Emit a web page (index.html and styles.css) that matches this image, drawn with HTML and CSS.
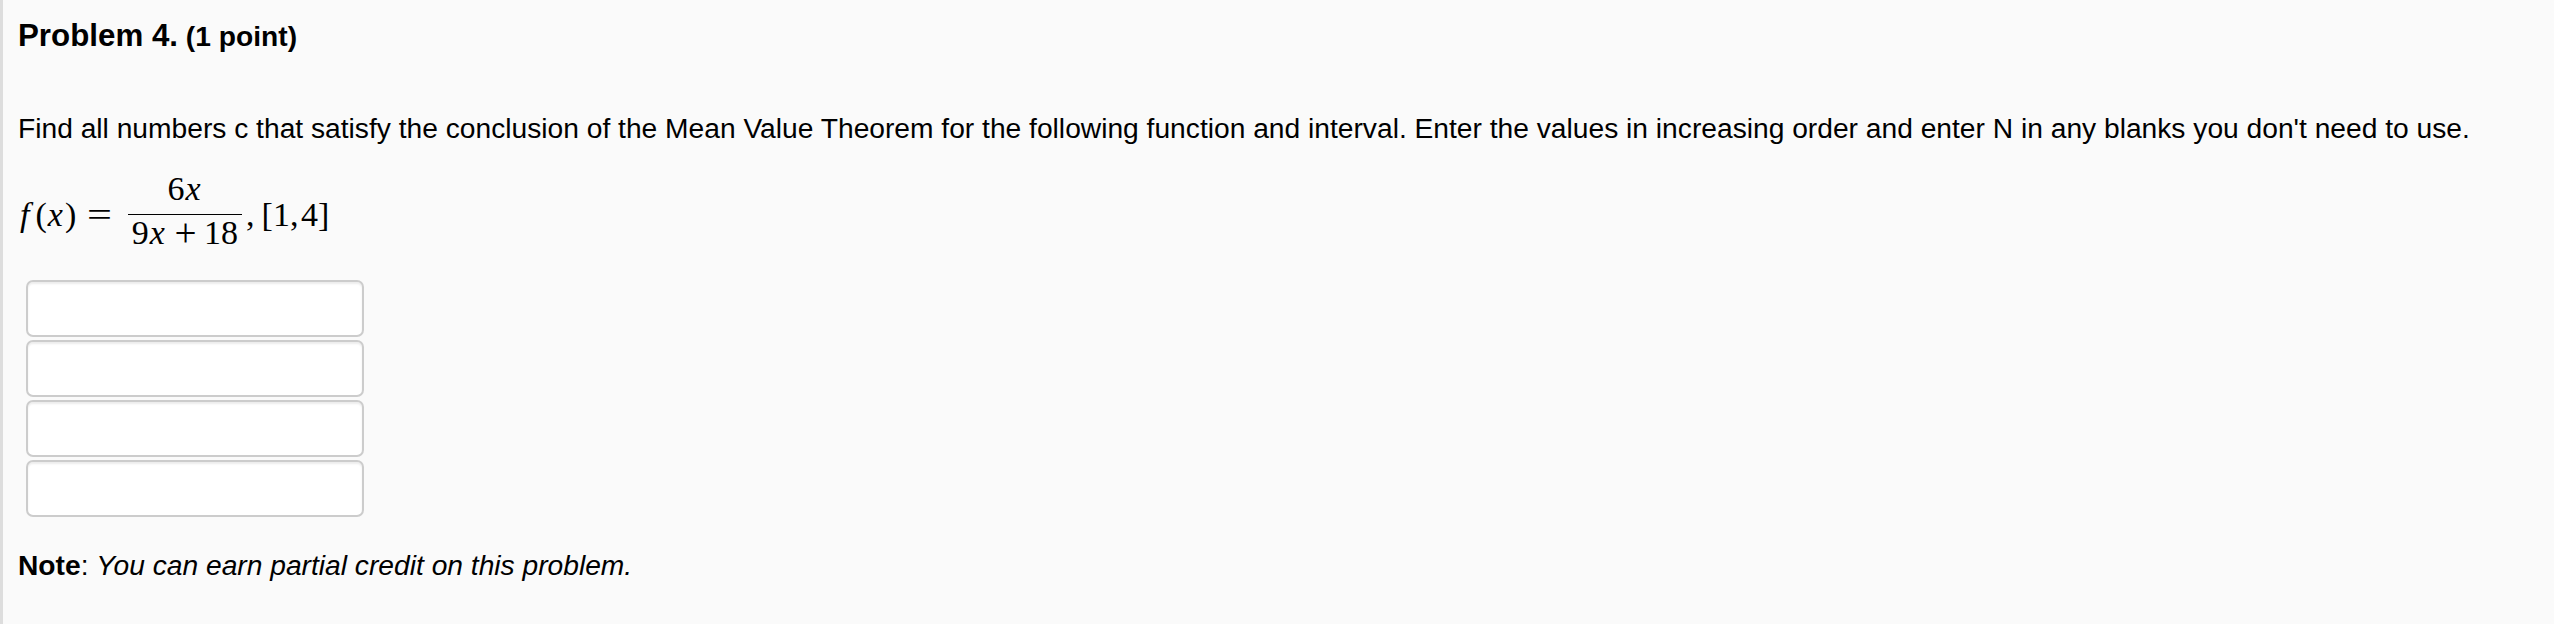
FILE: index.html
```html
<!DOCTYPE html>
<html lang="en">
<head>
<meta charset="utf-8">
<title>Problem 4</title>
<link rel="stylesheet" href="styles.css">
</head>
<body>
<div class="problem">
  <h2 class="title"><span class="label">Problem 4.</span> <span class="points">(1 point)</span></h2>
  <p class="text">Find all numbers c that satisfy the conclusion of the Mean Value Theorem for the following function and interval. Enter the values in increasing order and enter N in any blanks you don't need to use.</p>
  <div class="math">
    <span class="mi f">f</span><span class="mo">(</span><span class="mi x">x</span><span class="mo">)</span><span class="rel">=</span>
    <span class="frac">
      <span class="num">6<span class="mi x">x</span></span>
      <span class="den">9<span class="mi x">x</span><span class="bin">+</span>18</span>
    </span>
    <span class="punct">,</span><span class="mo">[1</span><span class="sep">,</span><span class="mo">4]</span>
  </div>
  <div class="answers">
    <input class="answer" type="text">
    <input class="answer" type="text">
    <input class="answer" type="text">
    <input class="answer" type="text">
  </div>
  <p class="note"><b>Note</b>: <i>You can earn partial credit on this problem.</i></p>
</div>
</body>
</html>
```
FILE: styles.css
```css
html, body {
  margin: 0;
  padding: 0;
  background: #fafafa;
}
body {
  font-family: "Liberation Sans", Arial, Helvetica, sans-serif;
  color: #000;
}
.problem {
  border-left: 3px solid #dddddd;
  min-height: 624px;
  box-sizing: border-box;
  padding: 16px 0 0 15px;
}
.title {
  margin: 0;
  font-size: 28.2px;
  line-height: 40px;
  font-weight: bold;
}
.label {
  font-size: 31.3px;
}
.text {
  margin: 52px 0 0 0;
  font-size: 28.2px;
  line-height: 40px;
}
.math {
  display: flex;
  align-items: center;
  margin-top: 22.5px;
  font-family: "Liberation Serif", "Times New Roman", serif;
  font-size: 34px;
  line-height: 36px;
  padding-left: 2px;
}
.mi {
  font-style: italic;
}
.f {
  margin-right: 6px;
}
.x {
  margin-left: 1px;
  margin-right: 2px;
}
.rel {
  margin: 0 15.4px 0 14px;
  display: inline-block;
  transform: scaleX(1.3);
}
.frac {
  display: inline-flex;
  flex-direction: column;
  align-items: stretch;
  padding: 0 3px;
}
.num {
  padding-bottom: 7.5px;
  border-bottom: 1.6px solid #000;
  text-align: center;
}
.den {
  padding: 0 4px 7.5px;
  text-align: center;
}
.bin {
  display: inline-block;
  margin: 0 9px;
  transform: scale(1.15);
}
.punct {
  margin: 0 7px 0 1px;
}
.sep {
  margin-right: 2.5px;
}
.answers {
  display: flex;
  flex-direction: column;
  gap: 3px;
  margin: 21px 0 0 8px;
}
.answer {
  width: 338px;
  height: 57px;
  box-sizing: border-box;
  border: 2px solid #cccccc;
  border-radius: 7px;
  background: #fff;
  box-shadow: inset 0 2px 2px rgba(0, 0, 0, 0.075);
  margin: 0;
  padding: 0 10px;
  font-size: 22px;
}
.note {
  margin: 28px 0 0 0;
  font-size: 28.2px;
  line-height: 40px;
}
```
